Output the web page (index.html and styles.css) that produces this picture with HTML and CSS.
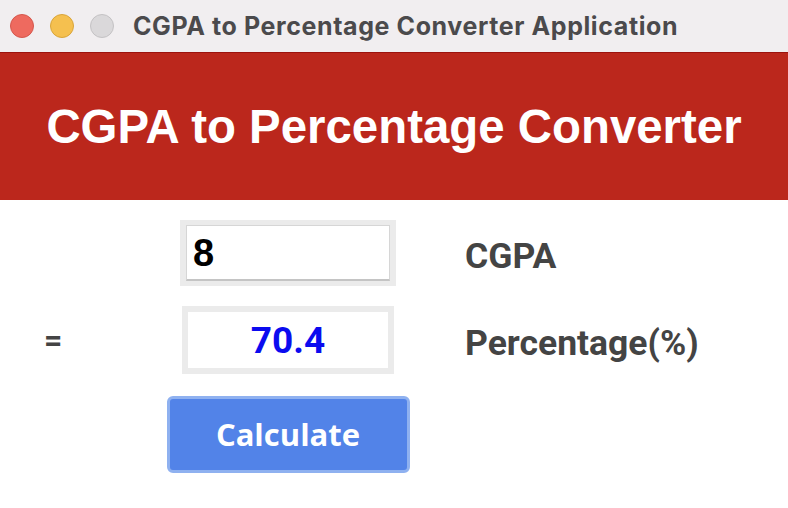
FILE: index.html
```html
<!DOCTYPE html>
<html lang="en">
<head>
  <meta charset="UTF-8" />
  <title>CGPA to Percentage Converter Application</title>
  <link rel="stylesheet" href="styles.css">
</head>
<body>
<div class="titlebar">
  <div class="lights">
    <span class="light red"></span>
    <span class="light yellow"></span>
    <span class="light grey"></span>
  </div>
  <div class="win-title">CGPA to Percentage Converter Application</div>
</div>
<header class="banner">
  <h1>CGPA to Percentage Converter</h1>
</header>
<main class="form">
  <div class="eq"></div>
  <div class="cell">
    <div class="entry"><input type="text" id="cgpa" value="8" /></div>
  </div>
  <div class="label">CGPA</div>

  <div class="eq">=</div>
  <div class="cell">
    <div class="result"><span id="percent">70.4</span></div>
  </div>
  <div class="label">Percentage(%)</div>

  <div></div>
  <div class="cell">
    <button class="calc">Calculate</button>
  </div>
  <div></div>
</main>
</body>
</html>
```

FILE: styles.css
```css
html, body {
  margin: 0;
  padding: 0;
  background: #ffffff;
  width: 788px;
  height: 508px;
  overflow: hidden;
}
body {
  font-family: Roboto, "Liberation Sans", sans-serif;
}
.titlebar {
  height: 52px;
  background: #f1eef0;
  display: flex;
  align-items: center;
}
.lights {
  display: flex;
  gap: 16px;
  padding-left: 10px;
}
.light {
  width: 22px;
  height: 22px;
  border-radius: 50%;
  border: 1px solid transparent;
}
.red { background: #ee6a5f; border-color: #d5574d; }
.yellow { background: #f5c04f; border-color: #d9a53a; }
.grey { background: #dad8da; border-color: #c4c2c4; }
.win-title {
  margin-left: 19px;
  font-family: Inter, Roboto, sans-serif;
  font-weight: 700;
  font-size: 25px;
  letter-spacing: 0.6px;
  color: #4b4a4c;
}
.banner {
  height: 147px;
  background: #bb271c;
  border-top: 1px solid #9c130e;
  display: flex;
  align-items: center;
  justify-content: center;
}
.banner h1 {
  margin: 0;
  color: #ffffff;
  font-family: "Liberation Sans", Arial, sans-serif;
  font-weight: 700;
  font-size: 47.4px;
}
.form {
  display: grid;
  grid-template-columns: 166px 244px 1fr;
  grid-template-rows: 66px 68px 79px;
  row-gap: 20px;
  padding-top: 20px;
}
.cell {
  display: flex;
  justify-content: center;
  align-items: center;
}
.eq {
  padding-left: 44px;
  display: flex;
  align-items: center;
  font-weight: 700;
  font-size: 32px;
  color: #444444;
}
.label {
  padding-left: 55px;
  padding-top: 6px;
  display: flex;
  align-items: center;
  font-weight: 700;
  font-size: 35.5px;
  color: #444444;
}
.entry {
  width: 204px;
  height: 56px;
  padding: 5px 6px;
  background: #ebebeb;
}
.entry input {
  box-sizing: border-box;
  width: 100%;
  height: 100%;
  margin: 0;
  border: 1px solid #d6d6d6;
  border-bottom: 2px solid #c4c4c4;
  background: #ffffff;
  padding: 2px 6px 0;
  font-family: "Liberation Sans", Arial, sans-serif;
  font-weight: 700;
  font-size: 38px;
  color: #000000;
  outline: none;
}
.result {
  width: 200px;
  height: 56px;
  border: 6px solid #ebebeb;
  background: #ffffff;
  display: flex;
  align-items: center;
  justify-content: center;
  font-weight: 700;
  font-size: 37px;
  color: #0b0bef;
}
.calc {
  width: 243px;
  height: 77px;
  margin: 2px 0 0;
  padding-bottom: 3px;
  background: #5283e8;
  border: 3px solid #8fb1f0;
  border-radius: 6px;
  color: #ffffff;
  font-family: "Open Sans", sans-serif;
  font-weight: 700;
  font-size: 31px;
  cursor: pointer;
}
```
